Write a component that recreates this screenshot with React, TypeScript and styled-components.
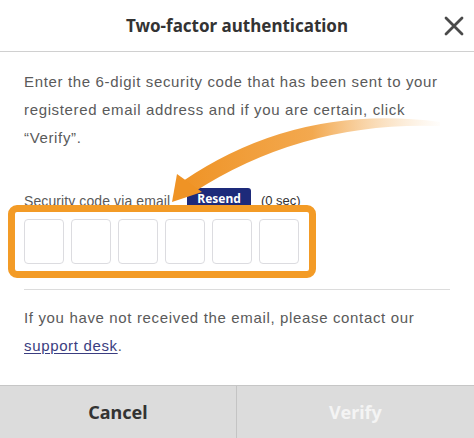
import styled, {createGlobalStyle} from 'styled-components';

const font = `"Noto Sans", "Noto Sans CJK JP", "Liberation Sans", sans-serif`;
const textFont = `"Liberation Sans", "Noto Sans CJK JP", Arial, sans-serif`;

const GlobalStyle = createGlobalStyle`
	html, body {
		margin: 0;
		padding: 0;
		background: #fff;
	}
	body {
		font-family: ${font};
	}
`;

const DIGITS = 6;

function App() {
	return (
		<>
			<GlobalStyle />
			<Modal>
				<Header>
					<Spacer />
					<Title>Two-factor authentication</Title>
					<CloseButton aria-label="Close">
						<svg width="20" height="20" viewBox="0 0 20 20">
							<path d="M2 2 L18 18 M18 2 L2 18" stroke="#4a4a4a" strokeWidth="2.8" strokeLinecap="round" />
						</svg>
					</CloseButton>
				</Header>

				<Body>
					<Text>
						Enter the 6-digit security code that has been sent to your registered email address and if you are certain, click “Verify”.
					</Text>

					<LabelRow>
						<Label>Security code via email</Label>
						<ResendButton>Resend</ResendButton>
						<Counter>(0 sec)</Counter>
					</LabelRow>

					<CodeRow>
						{Array.from({length: DIGITS}).map((_, i) => (
							<CodeBox key={i} maxLength={1} inputMode="numeric" />
						))}
						<Highlight />
					</CodeRow>

					<Divider />

					<Text>
						If you have not received the email, please contact our <SupportLink href="#">support desk</SupportLink>.
					</Text>
				</Body>

				<Footer>
					<FooterButton>Cancel</FooterButton>
					<FooterButton $disabled>Verify</FooterButton>
				</Footer>

				<Arrow width="474" height="438" viewBox="0 0 474 438">
					<defs>
						<linearGradient id="arrowFade" x1="180" y1="0" x2="445" y2="0" gradientUnits="userSpaceOnUse">
							<stop offset="0" stopColor="#ef9325" />
							<stop offset="0.5" stopColor="#f2a446" stopOpacity="0.95" />
							<stop offset="1" stopColor="#f7cf9c" stopOpacity="0" />
						</linearGradient>
					</defs>
					<path
						d="M440 122 Q298 103 183 181 L194 192 Q304 121 440 126 Z"
						fill="url(#arrowFade)"
					/>
					<polygon points="172,202 177,174 202,192" fill="#ef9325" />
				</Arrow>
			</Modal>
		</>
	);
}

export default App;

const Modal = styled.div`
	position: relative;
	width: 474px;
	height: 438px;
	display: flex;
	flex-direction: column;
	background: #fff;
	overflow: hidden;
`;

const Header = styled.header`
	height: 52px;
	display: grid;
	grid-template-columns: 1fr auto 1fr;
	align-items: center;
	border-bottom: 1px solid #d0d0d0;
	box-sizing: border-box;
`;

const Spacer = styled.div``;

const Title = styled.h1`
	margin: 0;
	font-size: 17px;
	font-weight: 700;
	color: #333;
`;

const CloseButton = styled.button`
	justify-self: end;
	margin-right: 10px;
	padding: 0;
	border: none;
	background: none;
	display: flex;
	cursor: pointer;
`;

const Body = styled.main`
	padding: 16px 24px 0;
	display: flex;
	flex-direction: column;
`;

const Text = styled.p`
	margin: 0;
	font-family: ${textFont};
	font-size: 15px;
	line-height: 28px;
	letter-spacing: 0.65px;
	color: #5a5a5a;
`;

const LabelRow = styled.div`
	margin-top: 36px;
	height: 22px;
	display: flex;
	align-items: center;
`;

const Label = styled.span`
	margin-top: 3px;
	font-family: ${textFont};
	font-size: 14px;
	letter-spacing: 0.1px;
	color: #5a5a5a;
`;

const ResendButton = styled.button`
	align-self: stretch;
	margin-left: 17px;
	padding: 0 10px;
	border: none;
	border-radius: 3px;
	background: #1d2a7a;
	color: #fff;
	font-family: ${font};
	font-size: 12px;
	font-weight: 700;
	line-height: 20px;
`;

const Counter = styled.span`
	margin-top: 3px;
	margin-left: 10px;
	font-family: ${textFont};
	font-size: 13px;
	color: #333;
`;

const CodeRow = styled.div`
	position: relative;
	margin-top: 9px;
	width: max-content;
	display: flex;
	gap: 7px;
`;

const CodeBox = styled.input`
	width: 40px;
	height: 45px;
	box-sizing: border-box;
	border: 1px solid #dcdce0;
	border-radius: 4px;
	background: #fff;
	font-family: ${font};
	font-size: 20px;
	text-align: center;
	outline: none;
`;

const Highlight = styled.div`
	position: absolute;
	inset: -14px -17px -14px -16px;
	border: 7px solid #f39b26;
	border-radius: 9px;
	pointer-events: none;
`;

const Divider = styled.hr`
	margin: 25px 0 14px;
	border: none;
	border-top: 1px solid #dcdcdc;
`;

const SupportLink = styled.a`
	color: #3a3d80;
	text-decoration: underline;
	text-underline-offset: 2px;
`;

const Footer = styled.footer`
	margin-top: auto;
	height: 53px;
	display: grid;
	grid-template-columns: 236px 1fr;
	background: #dcdcdc;
	border-top: 1px solid #c6c6c6;
	box-sizing: border-box;
`;

const FooterButton = styled.button<{$disabled?: boolean}>`
	border: none;
	border-left: ${props => (props.$disabled ? '1px solid #c4c4c4' : 'none')};
	background: transparent;
	font-family: ${font};
	font-size: 18px;
	font-weight: 700;
	color: ${props => (props.$disabled ? '#f4f4f4' : '#333')};
	cursor: ${props => (props.$disabled ? 'default' : 'pointer')};
`;

const Arrow = styled.svg`
	position: absolute;
	top: 0;
	left: 0;
	pointer-events: none;
`;
